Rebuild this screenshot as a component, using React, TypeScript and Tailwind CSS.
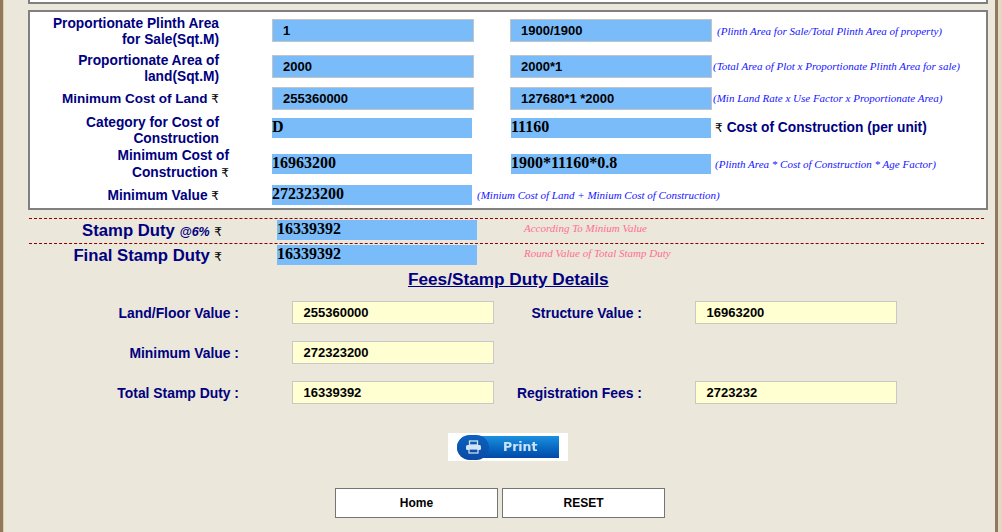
import React from "react";

const sans = "font-['Liberation_Sans',Arial,sans-serif]";
const serif = "font-['Liberation_Serif','Times_New_Roman',serif]";

function Rupee() {
	return <span className="font-['DejaVu_Sans',sans-serif] text-[12px] font-normal text-black">₹</span>;
}

function Label({ children, className = "" }: { children: React.ReactNode; className?: string }) {
	return <div className={`${sans} text-right font-bold leading-[16px] text-[#000080] ${className}`}>{children}</div>;
}

function Note({ children, className = "" }: { children: React.ReactNode; className?: string }) {
	return <span className={`${serif} whitespace-nowrap text-[11px] italic ${className}`}>{children}</span>;
}

function BlueInput({ value }: { value: string }) {
	return (
		<div className={`${sans} flex h-[23px] w-[202px] items-center border border-[#c4c4c4] bg-[#7abcfa] pl-[10px] text-[13px] font-bold text-black`}>
			{value}
		</div>
	);
}

function BlueValue({ value, className = "" }: { value: string; className?: string }) {
	return (
		<div className={`${serif} h-[20px] w-[200px] bg-[#7abcfa] text-[16px] font-bold leading-[17px] text-black ${className}`}>
			{value}
		</div>
	);
}

function YellowInput({ value }: { value: string }) {
	return (
		<div className={`${sans} flex h-[23px] w-[202px] items-center border border-[#c8c8c8] bg-[#ffffd2] pl-[10.5px] text-[13px] font-bold text-black`}>
			{value}
		</div>
	);
}

function FeeLabel({ children, className = "" }: { children: React.ReactNode; className?: string }) {
	return <div className={`${sans} whitespace-nowrap pt-[1px] text-right text-[13.9px] font-bold text-[#000080] ${className}`}>{children}</div>;
}

function PrintButton() {
	return (
		<div className="flex h-[28px] w-[120px] items-center bg-white pl-[9px]">
			<div className="flex h-[22px] w-[102px] items-center rounded-l-full rounded-r-[6px] bg-gradient-to-b from-[#1b90e0] to-[#0448a8] blur-[0.3px]">
				<div className="flex h-[25px] w-[32px] shrink-0 items-center justify-center rounded-full bg-gradient-to-b from-[#0d62bd] to-[#0a4aa6]">
					<svg width="17" height="14" viewBox="0 0 17 14" fill="none">
						<rect x="4.5" y="1" width="8" height="4" stroke="#d5e4f5" strokeWidth="1.3" />
						<rect x="1" y="5" width="15" height="5" rx="1.5" fill="#d5e4f5" />
						<rect x="4" y="9" width="9" height="4" fill="#0b4fae" stroke="#d5e4f5" strokeWidth="1.2" />
					</svg>
				</div>
				<span className="ml-[14px] font-['DejaVu_Sans',sans-serif] text-[12.5px] font-bold text-[#cfe3f6]">Print</span>
			</div>
		</div>
	);
}

function ActionButton({ label }: { label: string }) {
	return (
		<button className={`${sans} h-[30px] w-[163px] border border-[#757575] bg-white text-[12px] font-bold text-black`}>
			{label}
		</button>
	);
}

export default function App() {
	return (
		<div className="flex h-[532px] w-[1002px] overflow-hidden bg-[#ebe7da]">
			<div className="w-[3px] shrink-0 bg-[#8f7a61]" />
			<div className="w-[1px] shrink-0 bg-[#e8c9a0]" />
			<div className="w-[24px] shrink-0" />

			<div className="w-[960px] shrink-0">
				<div className="h-[4px] border-x-2 border-b-2 border-[#808080] bg-white" />

				{/* Calculation table */}
				<div className="mt-[6px] h-[200px] border-2 border-[#808080] bg-white text-[#1414ff]">
					<div className="flex h-[37px] items-center">
						<Label className="mt-[2px] w-[189px] text-[13.75px]">Proportionate Plinth Area<br />for Sale(Sqt.M)</Label>
						<div className="ml-[53px]"><BlueInput value="1" /></div>
						<div className="ml-[36px]"><BlueInput value="1900/1900" /></div>
						<Note className="ml-[5px] mt-[1px]">(Plinth Area for Sale/Total Plinth Area of property)</Note>
					</div>
					<div className="flex h-[35px] items-center">
						<Label className="mt-[5px] w-[189px] text-[13.75px]">Proportionate Area of<br />land(Sqt.M)</Label>
						<div className="ml-[53px]"><BlueInput value="2000" /></div>
						<div className="ml-[36px]"><BlueInput value="2000*1" /></div>
						<Note className="ml-[1px]">(Total Area of Plot x Proportionate Plinth Area for sale)</Note>
					</div>
					<div className="flex h-[29px] items-center">
						<Label className="w-[189px] text-[13.5px]">Minimum Cost of Land <Rupee /></Label>
						<div className="ml-[53px]"><BlueInput value="255360000" /></div>
						<div className="ml-[36px]"><BlueInput value="127680*1 *2000" /></div>
						<Note className="ml-[1px]">(Min Land Rate x Use Factor x Proportionate Area)</Note>
					</div>
					<div className="flex h-[34px] items-start pt-[1px]">
						<Label className="mt-[1px] w-[189px] text-[13.75px]">Category for Cost of<br />Construction</Label>
						<div className="ml-[53px] mt-[4px]"><BlueValue value="D" /></div>
						<div className="ml-[39px] mt-[4px]"><BlueValue value="11160" /></div>
						<div className={`${sans} ml-[4px] mt-[4px] flex h-[20px] items-center gap-[4px] whitespace-nowrap text-[13.75px] font-bold text-[#000080]`}>
							<Rupee /><span>Cost of Construction (per unit)</span>
						</div>
					</div>
					<div className="flex h-[37px] items-start">
						<Label className="w-[199px] text-[13.75px] !leading-[17px]">Minimum Cost of<br />Construction <Rupee /></Label>
						<div className="ml-[43px] mt-[7px]"><BlueValue value="16963200" /></div>
						<div className="ml-[39px] mt-[7px]"><BlueValue value="1900*11160*0.8" /></div>
						<Note className="ml-[4px] mt-[9px]">(Plinth Area * Cost of Construction * Age Factor)</Note>
					</div>
					<div className="flex h-[22px] items-center">
						<Label className="mt-[1px] w-[189px] text-[13.75px]">Minimum Value <Rupee /></Label>
						<div className="ml-[53px]"><BlueValue value="272323200" /></div>
						<Note className="ml-[5px]">(Minium Cost of Land + Minium Cost of Construction)</Note>
					</div>
				</div>

				{/* Stamp duty */}
				<div className="ml-[1px] mr-[4px] mt-[8px] flex h-[25px] border-t border-dashed border-[#8b0000]">
					<div className={`${sans} -mt-[1px] h-[24px] w-[193px] text-right text-[16.7px] font-bold text-[#000080]`}>
						Stamp Duty <span className="text-[12.5px] italic">@6%</span> <Rupee />
					</div>
					<div className="ml-[55px] mt-[1px]"><BlueValue value="16339392" /></div>
					<Note className="ml-[47px] pt-[1px] text-[#ff6f91]">According To Minium Value</Note>
				</div>
				<div className="ml-[1px] mr-[4px] flex h-[25px] border-t border-dashed border-[#8b0000]">
					<div className={`${sans} -mt-[1px] h-[24px] w-[193px] text-right text-[16.7px] font-bold text-[#000080]`}>
						Final Stamp Duty <Rupee />
					</div>
					<div className="ml-[55px] mt-[1px]"><BlueValue value="16339392" /></div>
					<Note className="ml-[47px] pt-[1px] text-[#ff6f91]">Round Value of Total Stamp Duty</Note>
				</div>

				<div className={`${sans} mt-[2px] h-[18px] pl-[380px] text-[17.2px] font-bold leading-[18px] text-[#000080] underline`}>
					Fees/Stamp Duty Details
				</div>

				{/* Fee summary */}
				<div className="mt-[13px] flex flex-col gap-[17px]">
					<div className="flex items-center">
						<FeeLabel className="w-[211px]">Land/Floor Value :</FeeLabel>
						<div className="ml-[53px]"><YellowInput value="255360000" /></div>
						<FeeLabel className="w-[148px]">Structure Value :</FeeLabel>
						<div className="ml-[53px]"><YellowInput value="16963200" /></div>
					</div>
					<div className="flex items-center">
						<FeeLabel className="w-[211px]">Minimum Value :</FeeLabel>
						<div className="ml-[53px]"><YellowInput value="272323200" /></div>
					</div>
					<div className="flex items-center">
						<FeeLabel className="w-[211px]">Total Stamp Duty :</FeeLabel>
						<div className="ml-[53px]"><YellowInput value="16339392" /></div>
						<FeeLabel className="w-[148px]">Registration Fees :</FeeLabel>
						<div className="ml-[53px]"><YellowInput value="2723232" /></div>
					</div>
				</div>

				<div className="mt-[29px] pl-[420px]"><PrintButton /></div>

				<div className="mt-[27px] flex gap-[4px] pl-[307px]">
					<ActionButton label="Home" />
					<ActionButton label="RESET" />
				</div>
			</div>

			<div className="w-[7px] shrink-0" />
			<div className="w-[3px] shrink-0 bg-[#8f7a61]" />
			<div className="w-[4px] shrink-0 bg-[#e6d8c0]" />
		</div>
	);
}
